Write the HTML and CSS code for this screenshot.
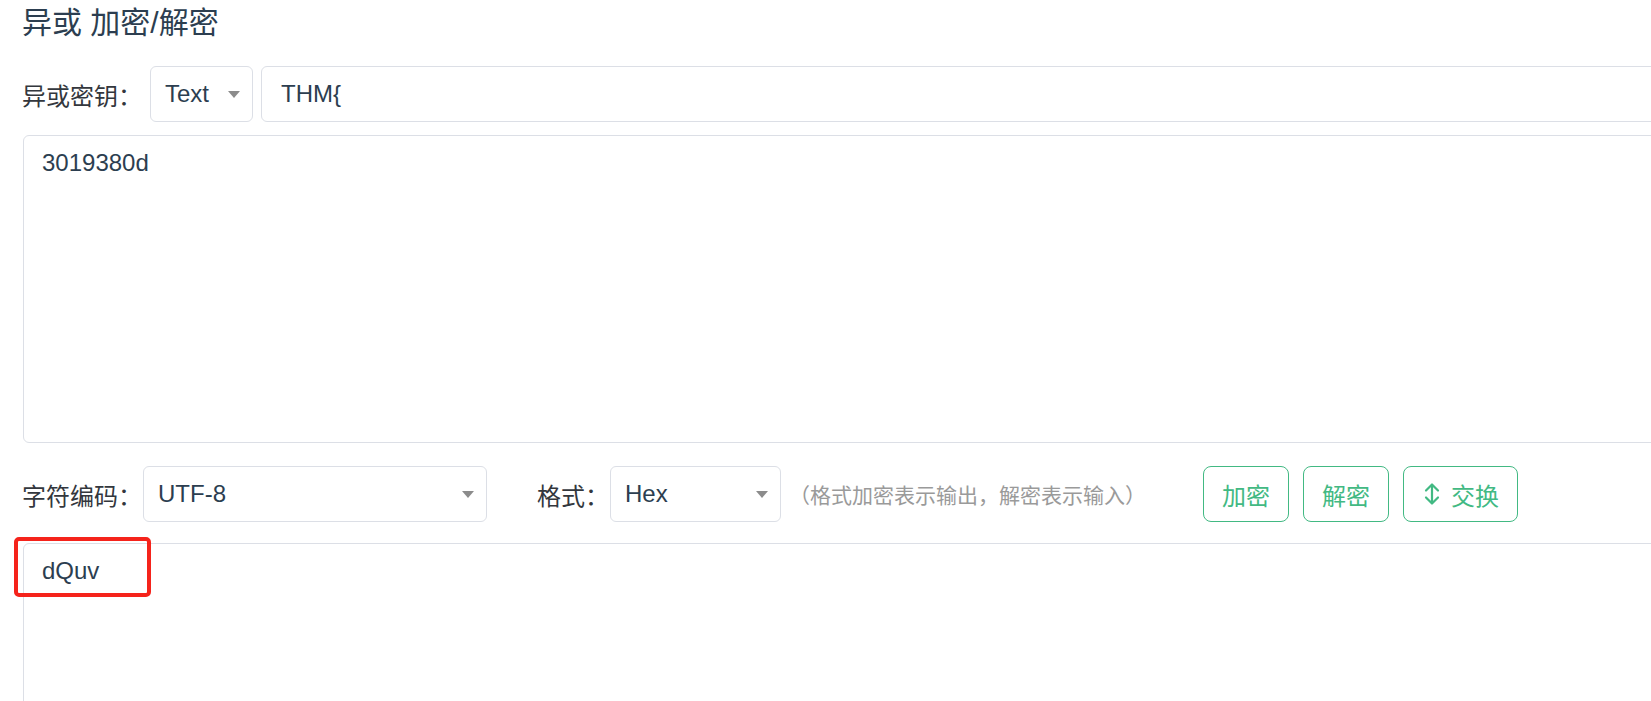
FILE: index.html
```html
<!DOCTYPE html>
<html lang="zh-CN">
<head>
<meta charset="utf-8">
<title>异或 加密/解密</title>
<link rel="stylesheet" href="styles.css">
</head>
<body>
<div class="page">
  <h1 class="title">异或 加密/解密</h1>

  <div class="row key-row">
    <span class="label label-key">异或密钥：</span>
    <div class="select select-type">
      <span>Text</span>
      <svg class="caret" width="12" height="7" viewBox="0 0 12 7"><path d="M0 0H12L6 7Z"/></svg>
    </div>
    <input class="key-input" type="text" value="THM{">
  </div>

  <textarea class="area area-input">3019380d</textarea>

  <div class="row opt-row">
    <span class="label">字符编码：</span>
    <div class="select select-charset">
      <span>UTF-8</span>
      <svg class="caret" width="12" height="7" viewBox="0 0 12 7"><path d="M0 0H12L6 7Z"/></svg>
    </div>
    <span class="label label-format">格式：</span>
    <div class="select select-format">
      <span>Hex</span>
      <svg class="caret" width="12" height="7" viewBox="0 0 12 7"><path d="M0 0H12L6 7Z"/></svg>
    </div>
    <span class="hint">（格式加密表示输出，解密表示输入）</span>
    <div class="actions">
      <button class="btn" type="button">加密</button>
      <button class="btn" type="button">解密</button>
      <button class="btn" type="button">
        <svg class="swap-icon" width="20" height="24" viewBox="0 0 20 24"><path d="M10 3V21M4 8.5L10 2.5L16 8.5M4 15.5L10 21.5L16 15.5"/></svg>
        <span>交换</span>
      </button>
    </div>
  </div>

  <div class="output-wrap">
    <textarea class="area area-output">dQuv</textarea>
    <div class="mark"></div>
  </div>
</div>
</body>
</html>
```

FILE: styles.css
```css
html, body {
  margin: 0;
  padding: 0;
  background: #ffffff;
  overflow: hidden;
}

body {
  font-family: "Liberation Sans", "Noto Sans CJK SC", sans-serif;
  color: #2c3e50;
}

.page {
  width: 1720px;
  padding-left: 22px;
}

.title {
  margin: 3px 0 0;
  font-size: 30px;
  line-height: 40px;
  font-weight: normal;
  color: #2c3e50;
}

.row {
  display: flex;
  align-items: center;
  height: 56px;
}

.key-row {
  margin-top: 23px;
}

.opt-row {
  margin-top: 23px;
}

.label {
  font-size: 24px;
  color: #33373d;
  white-space: nowrap;
}

.label-key {
  margin-right: 8px;
}

.label-format {
  margin-left: 50px;
}

.select {
  box-sizing: border-box;
  height: 56px;
  border: 1px solid #dcdfe6;
  border-radius: 6px;
  display: flex;
  align-items: center;
  justify-content: space-between;
  padding: 0 12px 0 14px;
  font-size: 24px;
  color: #2c3e50;
  background: #fff;
}

.caret path {
  fill: #8c8c8c;
}

.select-type {
  width: 103px;
}

.select-charset {
  width: 344px;
  margin-left: 1px;
}

.select-format {
  width: 171px;
  margin-left: 1px;
}

.key-input {
  flex: 1;
  margin-left: 8px;
  box-sizing: border-box;
  height: 56px;
  border: 1px solid #dcdfe6;
  border-radius: 6px;
  padding: 0 19px;
  font-family: "Liberation Sans", "Noto Sans CJK SC", sans-serif;
  font-size: 24px;
  color: #2c3e50;
  outline: none;
}

.area {
  display: block;
  box-sizing: border-box;
  width: 100%;
  margin-left: 1px;
  border: 1px solid #dcdfe6;
  border-radius: 6px;
  padding: 10px 18px;
  font-family: "Liberation Sans", "Noto Sans CJK SC", sans-serif;
  font-size: 24px;
  line-height: 1.45;
  color: #2c3e50;
  resize: none;
  outline: none;
  background: #fff;
}

.area-input {
  height: 308px;
  margin-top: 13px;
}

.hint {
  margin-left: 8px;
  font-size: 21px;
  color: #9a9a9a;
  white-space: nowrap;
}

.actions {
  display: flex;
  gap: 14px;
  margin-left: 57px;
}

.btn {
  box-sizing: border-box;
  height: 56px;
  padding: 0 18px;
  display: flex;
  align-items: center;
  border: 1px solid #42b983;
  border-radius: 8px;
  background: #fff;
  color: #42b983;
  font-family: "Liberation Sans", "Noto Sans CJK SC", sans-serif;
  font-size: 24px;
  cursor: pointer;
}

.swap-icon {
  margin-right: 9px;
}

.swap-icon path {
  fill: none;
  stroke: #42b983;
  stroke-width: 2.2;
  stroke-linecap: round;
  stroke-linejoin: round;
}

.output-wrap {
  position: relative;
  margin-top: 21px;
}

.area-output {
  height: 220px;
}

.mark {
  position: absolute;
  left: -8px;
  top: -6px;
  width: 137px;
  height: 60px;
  box-sizing: border-box;
  border: 4px solid #f5231b;
  border-radius: 5px;
}
```
